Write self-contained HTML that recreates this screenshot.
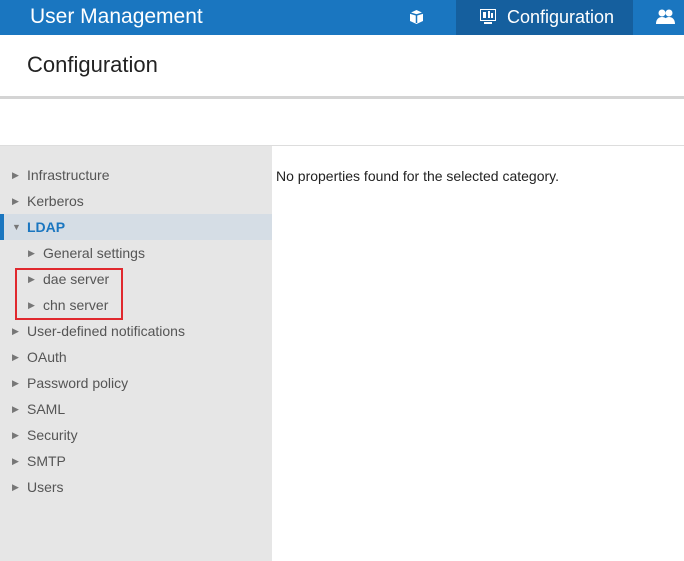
<!DOCTYPE html><html><head><style>
body{margin:0;width:684px;height:561px;overflow:hidden;font-family:"Liberation Sans",sans-serif;background:#fff;position:relative}
.top{position:absolute;left:0;top:0;width:684px;height:35px;background:#1a76c0;color:#fff}
.t{position:absolute;left:30px;top:5px;font-size:21px}
.tab{position:absolute;left:456px;top:0;width:177px;height:35px;background:#155f9e}
.tab span{position:absolute;left:51px;top:7px;font-size:18px}
.sub{position:absolute;top:35px;left:0;width:684px;height:61px;border-bottom:3px solid #d4d4d4}
.sub span{position:absolute;left:27px;top:17px;font-size:22px;color:#222}
.line{position:absolute;top:145px;left:0;width:684px;height:1px;background:#ddd}
.side{position:absolute;top:146px;left:0;width:272px;height:415px;background:#e6e6e6}
.it{position:absolute;left:0;width:272px;height:26px;font-size:14px;color:#555;line-height:26px}
.it i{font-style:normal;font-size:9px;color:#777;position:absolute;top:0}
.it b{font-weight:normal;position:absolute}
.msg{position:absolute;left:276px;top:168px;font-size:14px;color:#222}
</style></head><body>
<div class="top"><div class="t">User Management</div>
<svg style="position:absolute;left:409px;top:9px" width="15" height="16" viewBox="0 0 15 16"><path d="M7.5 1L14 4v8l-6.5 3L1 12V4z" fill="#fff"/><path d="M7.5 6v8M1 4l6.5 2 6.5-2" stroke="#1a76c0" stroke-width="1.5" fill="none"/></svg>
<div class="tab"><svg style="position:absolute;left:24px;top:9px" width="16" height="15"><rect x="0.5" y="0.5" width="15" height="11" fill="none" stroke="#fff"/><rect x="3" y="3" width="3" height="6" fill="#fff"/><rect x="8" y="2" width="2" height="7" fill="#fff"/><rect x="11" y="4" width="2" height="5" fill="#fff"/><rect x="4" y="13" width="8" height="2" fill="#fff"/></svg><span>Configuration</span></div>
<svg style="position:absolute;left:656px;top:8px" width="20" height="17"><circle cx="6" cy="5" r="3.5" fill="#fff"/><circle cx="13" cy="5" r="3.5" fill="#fff"/><path d="M0 16c0-5 3-7 6-7s6 2 6 7zM8 16c0-5 2-7 5-7s6 2 6 7z" fill="#fff"/></svg>
</div>
<div class="sub"><span>Configuration</span></div>
<div class="line"></div>
<div class="side">
<div class="it" style="top:16px"><i style="left:12px">▶</i><b style="left:27px">Infrastructure</b></div>
<div class="it" style="top:42px"><i style="left:12px">▶</i><b style="left:27px">Kerberos</b></div>
<div class="it" style="top:68px;background:#d5dde5"><div style="position:absolute;left:0;top:0;width:4px;height:26px;background:#1a76c0"></div><i style="left:12px">▼</i><b style="left:27px;color:#1a76c0;font-weight:bold">LDAP</b></div>
<div class="it" style="top:94px"><i style="left:28px">▶</i><b style="left:43px">General settings</b></div>
<div class="it" style="top:120px"><i style="left:28px">▶</i><b style="left:43px">dae server</b></div>
<div class="it" style="top:146px"><i style="left:28px">▶</i><b style="left:43px">chn server</b></div>
<div style="position:absolute;left:15px;top:122px;width:104px;height:48px;border:2px solid #e0282e"></div>
<div class="it" style="top:172px"><i style="left:12px">▶</i><b style="left:27px">User-defined notifications</b></div>
<div class="it" style="top:198px"><i style="left:12px">▶</i><b style="left:27px">OAuth</b></div>
<div class="it" style="top:224px"><i style="left:12px">▶</i><b style="left:27px">Password policy</b></div>
<div class="it" style="top:250px"><i style="left:12px">▶</i><b style="left:27px">SAML</b></div>
<div class="it" style="top:276px"><i style="left:12px">▶</i><b style="left:27px">Security</b></div>
<div class="it" style="top:302px"><i style="left:12px">▶</i><b style="left:27px">SMTP</b></div>
<div class="it" style="top:328px"><i style="left:12px">▶</i><b style="left:27px">Users</b></div>
</div>
<div class="msg">No properties found for the selected category.</div>
</body></html>
